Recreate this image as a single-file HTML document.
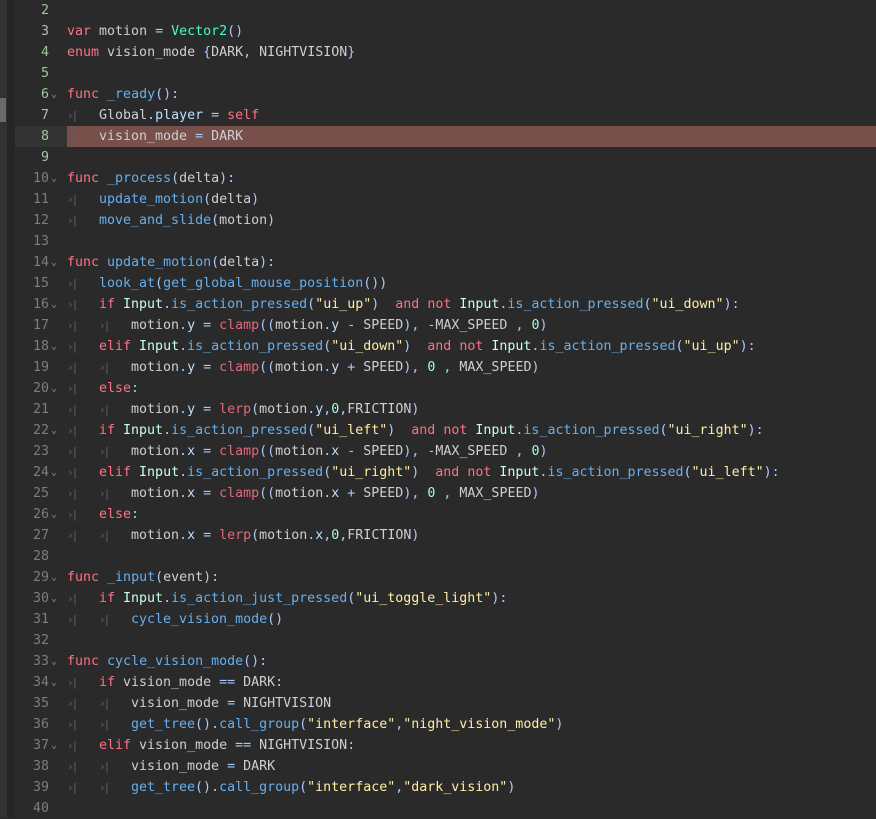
<!DOCTYPE html>
<html><head><meta charset="utf-8"><style>
html,body{margin:0;padding:0;width:876px;height:818px;overflow:hidden;background:#2a2a2a}
.lp{position:absolute;left:0;top:0;width:7px;height:818px;background:#323232}
.lp2{position:absolute;left:7px;top:0;width:8px;height:818px;background:#262626}
.thumb{position:absolute;left:0;top:98px;width:6px;height:24px;background:#6a6a6a}
.ln{position:absolute;left:15px;width:861px;height:21px;line-height:21px;font-family:"DejaVu Sans Mono","Liberation Mono",monospace;font-size:13.3px;white-space:pre;color:#cdcfd2}
.num{position:absolute;left:0;width:34px;text-align:right;color:#7d7d7d}
.num.g{color:#a7c4a4}
.fold{position:absolute;left:36px;top:0;color:#8a8a8a;font-size:10px}
.code{position:absolute;left:52px;top:0}
.hl{background:#77504c}
.hlg{background:#333}
i{display:inline-block;width:32px;font-style:normal;color:#5c6170;font-size:11px;letter-spacing:-2px;vertical-align:top}
.k{color:#ff7085}.f{color:#66afee}.g2{color:#e0697f}.s{color:#abc9ff}.st{color:#ffeda1}.n{color:#a1ffe0}.c{color:#42ffc2}.ci{color:#c7ffed}.m{color:#bce0ff}
</style></head><body>
<div class="lp"></div><div class="lp2"></div><div class="thumb"></div>

<div class="ln" style="top:0"><span class="num g">2</span></div>
<div class="ln" style="top:21px"><span class="num g">3</span><span class="code"><span class="k">var</span> motion <span class="s">=</span> <span class="c">Vector2</span><span class="s">()</span></span></div>
<div class="ln" style="top:42px"><span class="num g">4</span><span class="code"><span class="k">enum</span> vision_mode <span class="s">{</span>DARK<span class="s">,</span> NIGHTVISION<span class="s">}</span></span></div>
<div class="ln" style="top:63px"><span class="num g">5</span></div>
<div class="ln" style="top:84px"><span class="num g">6</span><span class="fold">⌄</span><span class="code"><span class="k">func</span> <span class="f">_ready</span><span class="s">():</span></span></div>
<div class="ln" style="top:105px"><span class="num g">7</span><span class="code"><i>›|</i>Global<span class="s">.</span><span class="m">player</span> <span class="s">=</span> <span class="k">self</span></span></div>
<div class="ln hlg" style="top:126px"><span class="num g">8</span><span class="code hl" style="width:809px"><i>›|</i>vision_mode <span class="s">=</span> DARK</span></div>
<div class="ln" style="top:147px"><span class="num g">9</span></div>
<div class="ln" style="top:168px"><span class="num">10</span><span class="fold">⌄</span><span class="code"><span class="k">func</span> <span class="f">_process</span><span class="s">(</span>delta<span class="s">):</span></span></div>
<div class="ln" style="top:189px"><span class="num">11</span><span class="code"><i>›|</i><span class="f">update_motion</span><span class="s">(</span>delta<span class="s">)</span></span></div>
<div class="ln" style="top:210px"><span class="num">12</span><span class="code"><i>›|</i><span class="f">move_and_slide</span><span class="s">(</span>motion<span class="s">)</span></span></div>
<div class="ln" style="top:231px"><span class="num">13</span></div>
<div class="ln" style="top:252px"><span class="num">14</span><span class="fold">⌄</span><span class="code"><span class="k">func</span> <span class="f">update_motion</span><span class="s">(</span>delta<span class="s">):</span></span></div>
<div class="ln" style="top:273px"><span class="num">15</span><span class="code"><i>›|</i><span class="f">look_at</span><span class="s">(</span><span class="f">get_global_mouse_position</span><span class="s">())</span></span></div>
<div class="ln" style="top:294px"><span class="num">16</span><span class="fold">⌄</span><span class="code"><i>›|</i><span class="k">if</span> <span class="ci">Input</span><span class="s">.</span><span class="f">is_action_pressed</span><span class="s">(</span><span class="st">"ui_up"</span><span class="s">)</span>  <span class="k">and</span> <span class="k">not</span> <span class="ci">Input</span><span class="s">.</span><span class="f">is_action_pressed</span><span class="s">(</span><span class="st">"ui_down"</span><span class="s">):</span></span></div>
<div class="ln" style="top:315px"><span class="num">17</span><span class="code"><i>›|</i><i>›|</i>motion<span class="s">.</span><span class="m">y</span> <span class="s">=</span> <span class="g2">clamp</span><span class="s">((</span>motion<span class="s">.</span><span class="m">y</span> <span class="s">-</span> SPEED<span class="s">),</span> <span class="s">-</span>MAX_SPEED <span class="s">,</span> <span class="n">0</span><span class="s">)</span></span></div>
<div class="ln" style="top:336px"><span class="num">18</span><span class="fold">⌄</span><span class="code"><i>›|</i><span class="k">elif</span> <span class="ci">Input</span><span class="s">.</span><span class="f">is_action_pressed</span><span class="s">(</span><span class="st">"ui_down"</span><span class="s">)</span>  <span class="k">and</span> <span class="k">not</span> <span class="ci">Input</span><span class="s">.</span><span class="f">is_action_pressed</span><span class="s">(</span><span class="st">"ui_up"</span><span class="s">):</span></span></div>
<div class="ln" style="top:357px"><span class="num">19</span><span class="code"><i>›|</i><i>›|</i>motion<span class="s">.</span><span class="m">y</span> <span class="s">=</span> <span class="g2">clamp</span><span class="s">((</span>motion<span class="s">.</span><span class="m">y</span> <span class="s">+</span> SPEED<span class="s">),</span> <span class="n">0</span> <span class="s">,</span> MAX_SPEED<span class="s">)</span></span></div>
<div class="ln" style="top:378px"><span class="num">20</span><span class="fold">⌄</span><span class="code"><i>›|</i><span class="k">else</span><span class="s">:</span></span></div>
<div class="ln" style="top:399px"><span class="num">21</span><span class="code"><i>›|</i><i>›|</i>motion<span class="s">.</span><span class="m">y</span> <span class="s">=</span> <span class="g2">lerp</span><span class="s">(</span>motion<span class="s">.</span><span class="m">y</span><span class="s">,</span><span class="n">0</span><span class="s">,</span>FRICTION<span class="s">)</span></span></div>
<div class="ln" style="top:420px"><span class="num">22</span><span class="fold">⌄</span><span class="code"><i>›|</i><span class="k">if</span> <span class="ci">Input</span><span class="s">.</span><span class="f">is_action_pressed</span><span class="s">(</span><span class="st">"ui_left"</span><span class="s">)</span>  <span class="k">and</span> <span class="k">not</span> <span class="ci">Input</span><span class="s">.</span><span class="f">is_action_pressed</span><span class="s">(</span><span class="st">"ui_right"</span><span class="s">):</span></span></div>
<div class="ln" style="top:441px"><span class="num">23</span><span class="code"><i>›|</i><i>›|</i>motion<span class="s">.</span><span class="m">x</span> <span class="s">=</span> <span class="g2">clamp</span><span class="s">((</span>motion<span class="s">.</span><span class="m">x</span> <span class="s">-</span> SPEED<span class="s">),</span> <span class="s">-</span>MAX_SPEED <span class="s">,</span> <span class="n">0</span><span class="s">)</span></span></div>
<div class="ln" style="top:462px"><span class="num">24</span><span class="fold">⌄</span><span class="code"><i>›|</i><span class="k">elif</span> <span class="ci">Input</span><span class="s">.</span><span class="f">is_action_pressed</span><span class="s">(</span><span class="st">"ui_right"</span><span class="s">)</span>  <span class="k">and</span> <span class="k">not</span> <span class="ci">Input</span><span class="s">.</span><span class="f">is_action_pressed</span><span class="s">(</span><span class="st">"ui_left"</span><span class="s">):</span></span></div>
<div class="ln" style="top:483px"><span class="num">25</span><span class="code"><i>›|</i><i>›|</i>motion<span class="s">.</span><span class="m">x</span> <span class="s">=</span> <span class="g2">clamp</span><span class="s">((</span>motion<span class="s">.</span><span class="m">x</span> <span class="s">+</span> SPEED<span class="s">),</span> <span class="n">0</span> <span class="s">,</span> MAX_SPEED<span class="s">)</span></span></div>
<div class="ln" style="top:504px"><span class="num">26</span><span class="fold">⌄</span><span class="code"><i>›|</i><span class="k">else</span><span class="s">:</span></span></div>
<div class="ln" style="top:525px"><span class="num">27</span><span class="code"><i>›|</i><i>›|</i>motion<span class="s">.</span><span class="m">x</span> <span class="s">=</span> <span class="g2">lerp</span><span class="s">(</span>motion<span class="s">.</span><span class="m">x</span><span class="s">,</span><span class="n">0</span><span class="s">,</span>FRICTION<span class="s">)</span></span></div>
<div class="ln" style="top:546px"><span class="num">28</span></div>
<div class="ln" style="top:567px"><span class="num">29</span><span class="fold">⌄</span><span class="code"><span class="k">func</span> <span class="f">_input</span><span class="s">(</span>event<span class="s">):</span></span></div>
<div class="ln" style="top:588px"><span class="num">30</span><span class="fold">⌄</span><span class="code"><i>›|</i><span class="k">if</span> <span class="ci">Input</span><span class="s">.</span><span class="f">is_action_just_pressed</span><span class="s">(</span><span class="st">"ui_toggle_light"</span><span class="s">):</span></span></div>
<div class="ln" style="top:609px"><span class="num">31</span><span class="code"><i>›|</i><i>›|</i><span class="f">cycle_vision_mode</span><span class="s">()</span></span></div>
<div class="ln" style="top:630px"><span class="num">32</span></div>
<div class="ln" style="top:651px"><span class="num">33</span><span class="fold">⌄</span><span class="code"><span class="k">func</span> <span class="f">cycle_vision_mode</span><span class="s">():</span></span></div>
<div class="ln" style="top:672px"><span class="num">34</span><span class="fold">⌄</span><span class="code"><i>›|</i><span class="k">if</span> vision_mode <span class="s">==</span> DARK<span class="s">:</span></span></div>
<div class="ln" style="top:693px"><span class="num">35</span><span class="code"><i>›|</i><i>›|</i>vision_mode <span class="s">=</span> NIGHTVISION</span></div>
<div class="ln" style="top:714px"><span class="num">36</span><span class="code"><i>›|</i><i>›|</i><span class="f">get_tree</span><span class="s">().</span><span class="f">call_group</span><span class="s">(</span><span class="st">"interface"</span><span class="s">,</span><span class="st">"night_vision_mode"</span><span class="s">)</span></span></div>
<div class="ln" style="top:735px"><span class="num">37</span><span class="fold">⌄</span><span class="code"><i>›|</i><span class="k">elif</span> vision_mode <span class="s">==</span> NIGHTVISION<span class="s">:</span></span></div>
<div class="ln" style="top:756px"><span class="num">38</span><span class="code"><i>›|</i><i>›|</i>vision_mode <span class="s">=</span> DARK</span></div>
<div class="ln" style="top:777px"><span class="num">39</span><span class="code"><i>›|</i><i>›|</i><span class="f">get_tree</span><span class="s">().</span><span class="f">call_group</span><span class="s">(</span><span class="st">"interface"</span><span class="s">,</span><span class="st">"dark_vision"</span><span class="s">)</span></span></div>
<div class="ln" style="top:798px"><span class="num">40</span></div>
</body></html>
